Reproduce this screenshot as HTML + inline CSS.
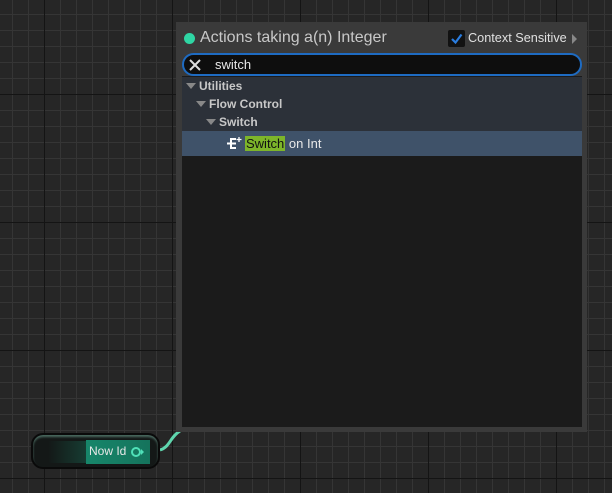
<!DOCTYPE html>
<html><head><meta charset="utf-8"><style>
*{margin:0;padding:0;box-sizing:border-box}
body{width:612px;height:493px;overflow:hidden;position:relative;font-family:"Liberation Sans",sans-serif;
background-color:#262626;
background-image:
linear-gradient(90deg,#141414 1px,transparent 1px),
linear-gradient(0deg,#141414 1px,transparent 1px),
linear-gradient(90deg,#353535 1px,transparent 1px),
linear-gradient(0deg,#353535 1px,transparent 1px);
background-size:128px 128px,128px 128px,16px 16px,16px 16px;
background-position:44px 0,0 95px,12px 0,0 15px;}
.panel{position:absolute;left:176px;top:22px;width:411px;height:410px;background:#3a3a3a}
.inner{position:absolute;left:6px;top:54px;width:400px;height:351px;background:#1b1b1b}
.title{position:absolute;left:24px;top:7px;color:#c8c8c8;font-size:16px}
.dot{position:absolute;left:8px;top:11px;width:11px;height:11px;border-radius:50%;background:#2fd6a4}
.cb{position:absolute;left:272px;top:8px;width:17px;height:17px;background:#121212;border-radius:2px}
.ctx{position:absolute;left:292px;top:9px;color:#e0e0e0;font-size:12.7px}
.arr{position:absolute;left:396px;top:12px;width:0;height:0;border-left:5px solid #888;border-top:5px solid transparent;border-bottom:5px solid transparent}
.search{position:absolute;left:6px;top:31px;width:400px;height:23px;border:2px solid #1e6bc2;border-radius:12px;background:#0e0e0e}
.search span{position:absolute;left:31px;top:2px;color:#e8e8e8;font-size:13px}
.row{position:absolute;left:6px;width:400px;height:18px;background:#2c3139;color:#c8c8c8;font-size:12px;font-weight:bold;line-height:18px}
.tri{display:inline-block;width:0;height:0;border-top:6px solid #888;border-left:5px solid transparent;border-right:5px solid transparent;margin-right:3px;vertical-align:1px}
.sel{position:absolute;left:6px;top:109px;width:400px;height:25px;background:#3f5269;color:#e8e8e8;font-size:13px;line-height:25px}
.hl{background:#7db52a;color:#111;padding:0 1px}
.node{position:absolute;left:31px;top:433px;width:129px;height:36px;border-radius:12px;background:#141817;border:2px solid #0a0a0a;box-shadow:inset 0 2px 2px #4a6a60;overflow:hidden}
.node .g0{position:absolute;left:15px;top:6px;width:40px;height:22px;background:linear-gradient(90deg,rgba(25,100,80,0),rgba(25,100,80,.5))}
.node .g{position:absolute;left:53px;top:5px;width:64px;height:24px;background:linear-gradient(90deg,#17866a,#15735c)}
.node span{position:absolute;left:56px;top:9px;color:#e8e8e8;font-size:12px}
</style></head><body>
<svg style="position:absolute;left:140px;top:425px" width="60" height="40"><path d="M20 25 C30 22 30 12 40 6" stroke="#5fd6ae" stroke-width="3" fill="none"/></svg>
<div class="node"><div class="g0"></div><div class="g"></div><span>Now Id</span>
<svg style="position:absolute;left:98px;top:11px" width="14" height="12"><circle cx="5" cy="6" r="4" stroke="#4fe0b8" stroke-width="2" fill="none"/><path d="M10 3 L13 6 L10 9Z" fill="#4fe0b8"/></svg></div>
<div class="panel">
<div class="inner"></div>
<div class="dot"></div>
<div class="title">Actions taking a(n) Integer</div>
<div class="cb"><svg width="17" height="17"><path d="M4 9 L7.5 12.5 L13.5 4.5" stroke="#2a7de0" stroke-width="2.2" fill="none"/></svg></div>
<div class="ctx">Context Sensitive</div>
<div class="arr"></div>
<div class="search"><svg style="position:absolute;left:4px;top:3px" width="14" height="14"><path d="M2 2L12 12M12 2L2 12" stroke="#ddd" stroke-width="2"/></svg><span>switch</span></div>
<div class="row" style="top:55px;padding-left:4px"><i class="tri"></i>Utilities</div>
<div class="row" style="top:73px;padding-left:14px"><i class="tri"></i>Flow Control</div>
<div class="row" style="top:91px;padding-left:24px"><i class="tri"></i>Switch</div>
<div class="sel"><svg style="position:absolute;left:45px;top:6px" width="16" height="13"><path d="M3 2H9M3 6.5H9M3 11H9M4 2V11M0 6.5H3" stroke="#fff" stroke-width="2" fill="none"/><path d="M12 0V5M9.5 2.5H14.5" stroke="#fff" stroke-width="1.3"/></svg><span style="position:absolute;left:63px"><span class="hl">Switch</span> on Int</span></div>
</div>
</body></html>
